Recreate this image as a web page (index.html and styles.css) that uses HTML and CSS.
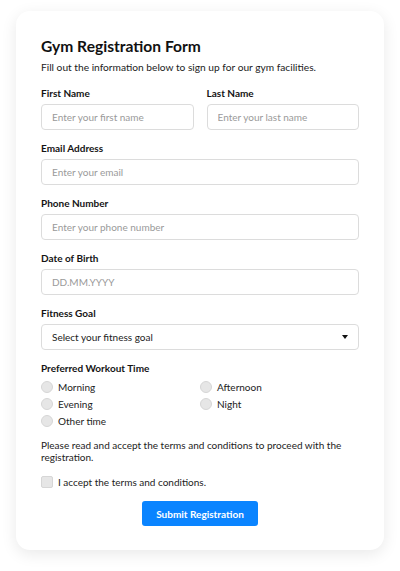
FILE: index.html
```html
<!DOCTYPE html>
<html lang="en">
<head>
  <title>Gym Registration Form</title>
  <link rel="stylesheet" href="styles.css">
</head>
<body>
  <div id="container">
    <form class="card">
      <h1 class="heading">Gym Registration Form</h1>
      <p class="intro">Fill out the information below to sign up for our gym facilities.</p>

      <div class="row">
        <div class="form-group">
          <label for="first-name">First Name</label>
          <input type="text" id="first-name" placeholder="Enter your first name">
        </div>
        <div class="form-group">
          <label for="last-name">Last Name</label>
          <input type="text" id="last-name" placeholder="Enter your last name">
        </div>
      </div>

      <div class="form-group">
        <label for="email">Email Address</label>
        <input type="email" id="email" placeholder="Enter your email">
      </div>

      <div class="form-group">
        <label for="phone">Phone Number</label>
        <input type="tel" id="phone" placeholder="Enter your phone number">
      </div>

      <div class="form-group">
        <label for="dob">Date of Birth</label>
        <input type="text" id="dob" placeholder="DD.MM.YYYY">
      </div>

      <div class="form-group">
        <label for="goal">Fitness Goal</label>
        <div class="select-wrap">
          <select id="goal">
            <option>Select your fitness goal</option>
            <option>Weight loss</option>
            <option>Muscle gain</option>
            <option>Endurance</option>
          </select>
          <span class="caret"></span>
        </div>
      </div>

      <div class="form-group">
        <div class="group-label">Preferred Workout Time</div>
        <div class="radio-grid">
          <label class="choice"><input type="radio" name="time"> Morning</label>
          <label class="choice"><input type="radio" name="time"> Afternoon</label>
          <label class="choice"><input type="radio" name="time"> Evening</label>
          <label class="choice"><input type="radio" name="time"> Night</label>
          <label class="choice"><input type="radio" name="time"> Other time</label>
        </div>
      </div>

      <p class="terms">Please read and accept the terms and conditions to proceed with the registration.</p>

      <label class="choice accept"><input type="checkbox"> I accept the terms and conditions.</label>

      <div class="actions">
        <button type="submit" class="button">Submit Registration</button>
      </div>
    </form>
  </div>
</body>
</html>
```

FILE: styles.css
```css
body,
html {
  margin: 0;
  padding: 0;
  background: #ffffff;
}

body {
  font-family: Lato, "Noto Sans", Arial, sans-serif;
  color: #222222;
  font-size: 10px;
}

#container {
  padding: 11px 16px 20px;
}

.card {
  background-color: #ffffff;
  border-radius: 14px;
  padding: 25px 25px 24px;
  box-shadow: 0 4px 16px rgba(0, 0, 0, 0.09);
}

.heading {
  font-size: 15.6px;
  font-weight: bold;
  color: #111111;
  margin: 0;
  line-height: 20px;
}

.intro {
  margin: 4px 0 13px;
  line-height: 14px;
  font-size: 10.2px;
}

.row {
  display: grid;
  grid-template-columns: 1fr 1fr;
  gap: 13px;
}

.form-group {
  margin-bottom: 12px;
}

.form-group > label,
.group-label {
  display: block;
  font-weight: bold;
  line-height: 12px;
  margin-bottom: 5px;
  color: #141414;
}

input[type="text"],
input[type="email"],
input[type="tel"],
select {
  display: block;
  box-sizing: border-box;
  width: 100%;
  height: 26px;
  padding: 0 10px;
  border: 1px solid #dcdcdc;
  border-radius: 4px;
  font-family: inherit;
  font-size: 10px;
  color: #222222;
  background: #ffffff;
}

input::placeholder {
  color: #9a9a9a;
}

.select-wrap {
  position: relative;
}

select {
  appearance: none;
  -webkit-appearance: none;
}

.caret {
  position: absolute;
  right: 11px;
  top: 11px;
  border-left: 3.5px solid transparent;
  border-right: 3.5px solid transparent;
  border-top: 4px solid #111111;
}

.radio-grid {
  display: grid;
  grid-template-columns: 1fr 1fr;
  row-gap: 5px;
  margin-top: 7px;
}

.choice {
  display: flex;
  align-items: center;
  gap: 5px;
  line-height: 12px;
  color: #222222;
}

.choice input {
  appearance: none;
  -webkit-appearance: none;
  flex: none;
  width: 12px;
  height: 12px;
  margin: 0;
  background: #e6e6e6;
  border: 1px solid #d6d6d6;
  border-radius: 50%;
  box-sizing: border-box;
}

.choice input[type="checkbox"] {
  border-radius: 2px;
}

.terms {
  margin: 13px 0 13px;
  line-height: 11.5px;
}

.actions {
  display: flex;
  justify-content: center;
  margin-top: 13px;
}

.button {
  width: 116px;
  height: 25px;
  background-color: #0a84ff;
  color: #ffffff;
  border: none;
  border-radius: 3px;
  font-family: inherit;
  font-weight: bold;
  font-size: 10px;
}
```
